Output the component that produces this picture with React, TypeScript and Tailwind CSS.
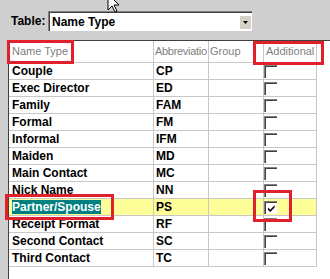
import React from "react";

const rows: [string, string, boolean][] = [
  ["Couple", "CP", false],
  ["Exec Director", "ED", false],
  ["Family", "FAM", false],
  ["Formal", "FM", false],
  ["Informal", "IFM", false],
  ["Maiden", "MD", false],
  ["Main Contact", "MC", false],
  ["Nick Name", "NN", false],
  ["Partner/Spouse", "PS", true],
  ["Receipt Format", "RF", false],
  ["Second Contact", "SC", false],
  ["Third Contact", "TC", false],
];

function CheckBox({ checked }: { checked: boolean }) {
  return (
    <div className="w-[13px] h-[13px] border-t border-l border-[#808080] border-b-white border-r-white">
      <div className="w-full h-full border-t border-l border-[#404040] border-b-[#d4d0c8] border-r-[#d4d0c8] bg-white flex items-center justify-center">
        {checked && (
          <svg width="9" height="9" viewBox="0 0 9 9">
            <path d="M1 3.5 L3.2 5.7 L7.6 1.3 L7.6 3.6 L3.2 8 L1 5.8 Z" fill="#000" />
          </svg>
        )}
      </div>
    </div>
  );
}

export default function App() {
  return (
    <div
      className="relative w-[330px] h-[279px] overflow-hidden bg-[#cfcfcf] flex flex-col"
      style={{ fontFamily: '"Liberation Sans", Arial, sans-serif' }}
    >
      {/* Top bar */}
      <div className="h-[40px] flex items-center pl-[11px] pt-[1px]">
        <span className="text-[12px] font-bold text-black w-[37px] leading-none">Table:</span>
        <div className="w-[204px] h-[20px] border-t border-l border-[#808080] border-b-white border-r-white">
          <div className="w-full h-full border-t border-l border-[#404040] border-b-[#d4d0c8] border-r-[#d4d0c8] bg-white flex items-center justify-between pl-[2px] pr-[1px]">
            <span className="text-[12px] font-bold text-black leading-none">Name Type</span>
            <div className="w-[12px] h-[14px] bg-[#d4d0c8] border-t border-l border-white border-b-[#404040] border-r-[#404040] flex items-center justify-center">
              <svg width="5" height="3" viewBox="0 0 5 3">
                <path d="M0 0 H5 L2.5 3 Z" fill="#000" />
              </svg>
            </div>
          </div>
        </div>
      </div>

      {/* Grid */}
      <div className="flex-1 ml-[8px] bg-white border-t border-l border-[#404040] flex flex-col">
        {/* Header */}
        <div className="flex h-[22px] text-[11px] text-[#808080]">
          <div className="w-[145px] border-r border-b border-[#c8c8c8] pl-[3px] flex items-center">Name Type</div>
          <div className="w-[55px] border-r border-b border-[#c8c8c8] pl-[1px] flex items-center whitespace-nowrap tracking-[-0.3px]">
            Abbreviatio
          </div>
          <div className="w-[55px] border-r border-b border-[#c8c8c8] pl-[1px] flex items-center">Group</div>
          <div className="w-[53px] border-r border-b border-[#c8c8c8] pl-[2px] flex items-center">Additional</div>
        </div>
        {rows.map(([name, abbr, checked]) => (
          <div key={name} className="flex h-[17px] text-[12px] font-bold text-black">
            <div className={`w-[145px] border-r border-b border-[#c8c8c8] pl-[3px] flex items-center ${checked ? "bg-[#ffff99]" : ""}`}>
              {checked ? (
                <span className="bg-[#008080] text-white leading-[14px]">{name}</span>
              ) : (
                <span className="leading-none">{name}</span>
              )}
            </div>
            <div className={`w-[55px] border-r border-b border-[#c8c8c8] pl-[2px] flex items-center ${checked ? "bg-[#ffff99]" : ""}`}>
              {abbr}
            </div>
            <div className={`w-[55px] border-r border-b border-[#c8c8c8] ${checked ? "bg-[#ffff99]" : ""}`} />
            <div className={`w-[53px] border-r border-b border-[#c8c8c8] flex items-center ${checked ? "bg-[#ffff99]" : ""}`}>
              <CheckBox checked={checked} />
            </div>
          </div>
        ))}
      </div>

      {/* Annotation boxes */}
      <div className="absolute left-[7px] top-[40px] w-[67px] h-[24px] border-[3px] border-[#e0202a]" />
      <div className="absolute left-[253px] top-[41px] w-[71px] h-[24px] border-[3px] border-[#e0202a]" />
      <div className="absolute left-[5px] top-[194px] w-[109px] h-[26px] border-[3px] border-[#e0202a]" />
      <div className="absolute left-[253px] top-[190px] w-[39px] h-[32px] border-[3px] border-[#e0202a]" />

      {/* Mouse cursor */}
      <svg className="absolute left-[107px] top-[-7px]" width="14" height="21" viewBox="0 0 14 21">
        <path d="M1 1 L1 17 L5 13 L8 19 L10 18 L7 12 L12 12 Z" fill="#fff" stroke="#000" strokeWidth="1" />
      </svg>
    </div>
  );
}
